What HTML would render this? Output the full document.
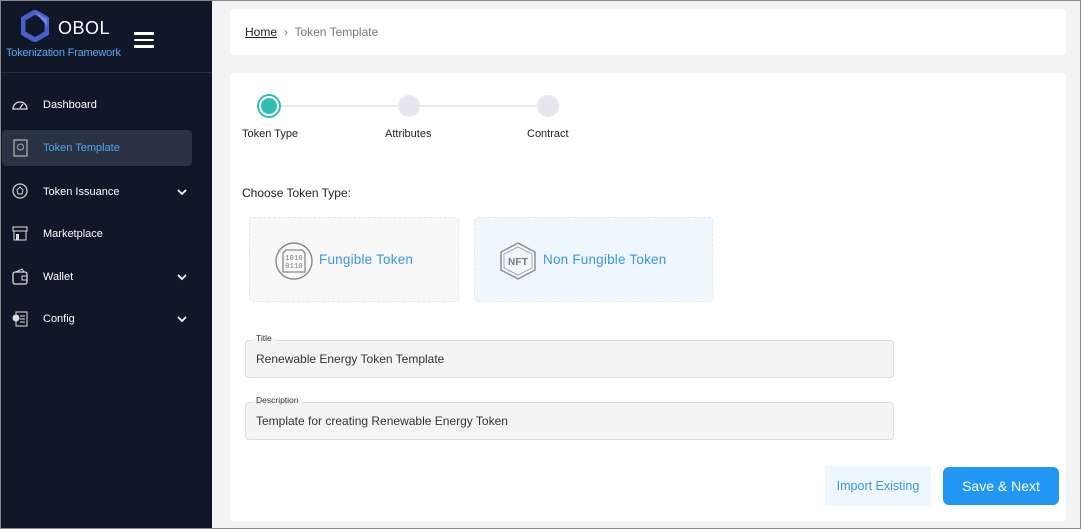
<!DOCTYPE html>
<html><head><style>
*{box-sizing:border-box;margin:0;padding:0}
body{width:1081px;height:529px;overflow:hidden;font-family:"Liberation Sans",sans-serif;background:#f2f3f5;position:relative}
.frame{position:absolute;left:0;top:0;width:1081px;height:529px;border:1px solid #888;z-index:10;pointer-events:none}
.sb{position:absolute;left:0;top:0;width:212px;height:529px;background:#0f1729;color:#e8eaee}
.logo{position:absolute;left:21px;top:10px}
.obol{position:absolute;left:58px;top:18px;font-size:18px;color:#fff;letter-spacing:0.5px}
.tf{position:absolute;left:6px;top:47px;font-size:11px;color:#5aa7ee;letter-spacing:-0.2px}
.ham{position:absolute;left:134px;top:32px;width:20px}
.ham i{display:block;height:2.5px;background:#fff;margin-bottom:4px;border-radius:1px}
.sep{position:absolute;left:0;top:72px;width:212px;height:1px;background:#263044}
.it{position:absolute;left:0;width:212px;height:36px;font-size:11px;color:#fff}
.it span{position:absolute;left:43px;top:12px}
.it svg.ic{position:absolute;left:11px;top:9px}
.act{left:2px;width:190px;background:#2a3344;border-radius:4px}
.chev{position:absolute;left:176px;top:13px}
.bc{position:absolute;left:230px;top:9px;width:836px;height:46px;background:#fff;border-radius:3px;font-size:12px;color:#777}
.bc a{position:absolute;left:15px;top:16px;color:#222;text-decoration:underline}
.card{position:absolute;left:230px;top:73px;width:836px;height:448px;background:#fff;border-radius:3px}
.dot{position:absolute;width:22px;height:22px;border-radius:50%;border:2px solid #e8e8ee;background:#e6e6ee}
.line{position:absolute;top:32px;height:2px;background:#e8e8ee}
.lab{position:absolute;top:55px;font-size:11px;color:#222}
.opt{position:absolute;top:144px;height:85px;border:1px dashed #e6e6e6;border-radius:4px;font-size:13.5px;color:#3a95ea;letter-spacing:0.2px}
.opt span{position:absolute;top:34px}
.fld{position:absolute;left:15px;width:649px;height:38px;background:#f4f4f4;border:1px solid #ddd;border-radius:4px;font-size:12px;color:#333}
.fld span{position:absolute;left:10px;top:11px}
.fld b{position:absolute;left:7px;top:-8px;font-weight:normal;font-size:8.5px;padding:0 3px;background:linear-gradient(#fff 50%,#f4f4f4 50%);color:#333}
</style></head><body>
<div class="frame"></div>
<div class="sb">
<svg class="logo" width="28" height="32" viewBox="0 0 28 32"><polygon points="14,2 26,9 26,23 14,30 2,23 2,9" fill="none" stroke="#4a5fc8" stroke-width="5"/><polygon points="14,2 26,9 26,16" fill="#6f84e8"/></svg>
<div class="obol">OBOL</div>
<div class="tf">Tokenization Framework</div>
<div class="ham"><i></i><i></i><i></i></div>
<div class="sep"></div>
<div class="it" style="top:87px"><svg class="ic" width="18" height="18"><path d="M2 13a7 7 0 0 1 14 0z" fill="none" stroke="#ddd" stroke-width="1.3"/><path d="M9 12l3-4" stroke="#ddd" stroke-width="1.3"/></svg><span>Dashboard</span></div>
<div class="it act" style="top:130px"><svg class="ic" style="left:10px" width="18" height="18"><rect x="2" y="1" width="13" height="16" fill="none" stroke="#aaa" stroke-width="1.3"/><circle cx="8.5" cy="8" r="3" fill="none" stroke="#aaa"/></svg><span style="left:41px;color:#4ea4ee">Token Template</span></div>
<div class="it" style="top:174px"><svg class="ic" width="18" height="18"><circle cx="9" cy="8" r="7" fill="none" stroke="#ccc" stroke-width="1.3"/><polygon points="9,4 12,7 11,11 7,11 6,7" fill="none" stroke="#ccc"/></svg><span>Token Issuance</span><svg class="chev" width="12" height="10"><path d="M2 3l4 4 4-4" fill="none" stroke="#fff" stroke-width="1.8"/></svg></div>
<div class="it" style="top:216px"><svg class="ic" width="18" height="18"><rect x="2" y="2" width="14" height="4" fill="none" stroke="#ddd"/><rect x="3" y="6" width="12" height="9" fill="none" stroke="#ddd"/><rect x="5" y="9" width="3" height="6" fill="#ddd"/></svg><span>Marketplace</span></div>
<div class="it" style="top:259px"><svg class="ic" width="18" height="18"><rect x="2" y="4" width="14" height="12" rx="2" fill="none" stroke="#ddd" stroke-width="1.3"/><rect x="11" y="8" width="5" height="4" fill="none" stroke="#ddd"/><path d="M5 4l6-3 2 3" fill="none" stroke="#ddd"/></svg><span>Wallet</span><svg class="chev" width="12" height="10"><path d="M2 3l4 4 4-4" fill="none" stroke="#fff" stroke-width="1.8"/></svg></div>
<div class="it" style="top:301px"><svg class="ic" width="18" height="18"><rect x="5" y="2" width="11" height="14" fill="none" stroke="#ddd"/><circle cx="5" cy="8" r="3.5" fill="#ddd"/><path d="M9 6h5M9 9h5M9 12h5" stroke="#ddd"/></svg><span>Config</span><svg class="chev" width="12" height="10"><path d="M2 3l4 4 4-4" fill="none" stroke="#fff" stroke-width="1.8"/></svg></div>
</div>
<div class="bc"><a>Home</a><span style="position:absolute;left:54px;top:16px">›&nbsp; Token Template</span></div>
<div class="card">
<div class="line" style="left:50px;width:120px"></div><div class="line" style="left:189px;width:120px"></div>
<div class="dot" style="background:#2fbfb0;border:2px solid #fff;box-shadow:0 0 0 2px #2fbfb0;width:20px;height:20px;top:23px;left:29px"></div>
<div class="dot" style="left:168px;top:22px"></div>
<div class="dot" style="left:307px;top:22px"></div>
<div class="lab" style="left:12px">Token Type</div>
<div class="lab" style="left:155px">Attributes</div>
<div class="lab" style="left:297px">Contract</div>
<div style="position:absolute;left:12px;top:113px;font-size:12px;color:#222">Choose Token Type:</div>
<div class="opt" style="left:19px;width:210px;background:#f8f8f8"><svg style="position:absolute;left:24px;top:24px" width="40" height="38"><circle cx="20" cy="19" r="18" fill="none" stroke="#888" stroke-width="1.4"/><polygon points="12,8 28,8 31,11 31,30 9,30 9,11" fill="none" stroke="#888" stroke-width="1.3"/><text x="20" y="18" font-size="7" text-anchor="middle" fill="#777" font-family="Liberation Mono">1010</text><text x="20" y="26" font-size="7" text-anchor="middle" fill="#777" font-family="Liberation Mono">0110</text></svg><span style="left:69px">Fungible Token</span></div>
<div class="opt" style="left:244px;width:239px;background:#eff7fe"><svg style="position:absolute;left:24px;top:23px" width="38" height="40"><polygon points="19,2 36,11 36,29 19,38 2,29 2,11" fill="none" stroke="#888" stroke-width="1.4"/><polygon points="19,6 33,13 33,27 19,34 5,27 5,13" fill="none" stroke="#999" stroke-width="0.8"/><text x="19" y="24" font-size="10" font-weight="bold" text-anchor="middle" fill="#777">NFT</text></svg><span style="left:68px">Non Fungible Token</span></div>
<div class="fld" style="top:267px"><b>Title</b><span>Renewable Energy Token Template</span></div>
<div class="fld" style="top:329px"><b>Description</b><span>Template for creating Renewable Energy Token</span></div>
<div style="position:absolute;left:595px;top:393px;width:106px;height:40px;background:#eff7fe;color:#3a95ea;font-size:12.5px;text-align:center;line-height:40px">Import Existing</div>
<div style="position:absolute;left:713px;top:394px;width:116px;height:38px;background:#2196f3;color:#fff;font-size:14px;text-align:center;line-height:38px;border-radius:6px">Save &amp; Next</div>
</div>
</body></html>
